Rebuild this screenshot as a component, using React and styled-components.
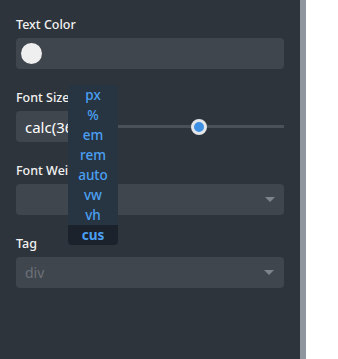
import React from 'react';
import styled, { createGlobalStyle } from 'styled-components';

const Global = createGlobalStyle`
    html, body {
        margin: 0;
        padding: 0;
        background: #FFFFFF;
    }
    * {
        box-sizing: border-box;
    }
`;

const Panel = styled.div`
    width: 306px;
    height: 359px;
    background: #2e343b;
    border-right: 6px solid #8f959c;
    padding: 15px 16px 0 16px;
    font-family: 'Noto Sans', 'Open Sans', sans-serif;
    display: flex;
    flex-direction: column;
    gap: 19px;
`;

const Group = styled.div`
    position: relative;
    display: flex;
    flex-direction: column;
    gap: 5px;
`;

const Label = styled.div`
    color: #f2f2f2;
    font-size: 12.5px;
    font-weight: 500;
    line-height: 20px;
    height: 18px;
    white-space: nowrap;
`;

const Box = styled.div`
    height: 31px;
    background: #40464e;
    border-radius: 4px;
    display: flex;
    align-items: center;
    padding: 0 ${({ pad }) => pad || 8}px;
`;

const Swatch = styled.div`
    width: 21px;
    height: 21px;
    border-radius: 50%;
    background: #efefef;
    margin-left: -3px;
`;

const SizeRow = styled.div`
    display: flex;
    align-items: center;
    gap: 12px;
`;

const SizeInput = styled(Box)`
    width: 90px;
    color: #ffffff;
    font-size: 15px;
    overflow: hidden;
    white-space: nowrap;
`;

const Track = styled.div`
    flex: 1;
    height: 3px;
    background: #4b5159;
    position: relative;
`;

const Thumb = styled.div`
    position: absolute;
    top: 50%;
    width: 16px;
    height: 16px;
    margin: -8px 0 0 -8px;
    border-radius: 50%;
    background: #3d8fe3;
    border: 3px solid #e3e5e8;
`;

const Select = styled(Box)`
    justify-content: space-between;
    color: #6c7179;
    font-size: 14px;
`;

const Arrow = styled.div`
    width: 0;
    height: 0;
    border-left: 5px solid transparent;
    border-right: 5px solid transparent;
    border-top: 5px solid #7f848b;
    margin-right: 1px;
`;

const Menu = styled.div`
    position: absolute;
    left: 52px;
    top: -3px;
    width: 50px;
    background: #273441;
    border-radius: 4px;
    overflow: hidden;
    z-index: 2;
`;

const Item = styled.div`
    height: 20px;
    line-height: 20px;
    text-align: center;
    font-size: 13.5px;
    color: #4ba0f3;
    font-weight: ${({ active }) => active ? 700 : 500};
    background: ${({ active }) => active ? '#1b222b' : 'transparent'};
`;

const units = ['px', '%', 'em', 'rem', 'auto', 'vw', 'vh', 'cus'];

const App = () => {
    const value = 0.485;
    return (
        <>
            <Global />
            <Panel>
                <Group>
                    <Label>Text Color</Label>
                    <Box><Swatch /></Box>
                </Group>
                <Group>
                    <Label>Font Size</Label>
                    <SizeRow>
                        <SizeInput pad={9}>calc(36px)</SizeInput>
                        <Track>
                            <Thumb style={{ left: `${value * 100}%` }} />
                        </Track>
                    </SizeRow>
                    <Menu>
                        {units.map(u => (
                            <Item key={u} active={u === 'cus'}>{u}</Item>
                        ))}
                    </Menu>
                </Group>
                <Group>
                    <Label>Font Weight</Label>
                    <Select><span></span><Arrow /></Select>
                </Group>
                <Group>
                    <Label>Tag</Label>
                    <Select pad={9}><span>div</span><Arrow /></Select>
                </Group>
            </Panel>
        </>
    );
};

export default App;
